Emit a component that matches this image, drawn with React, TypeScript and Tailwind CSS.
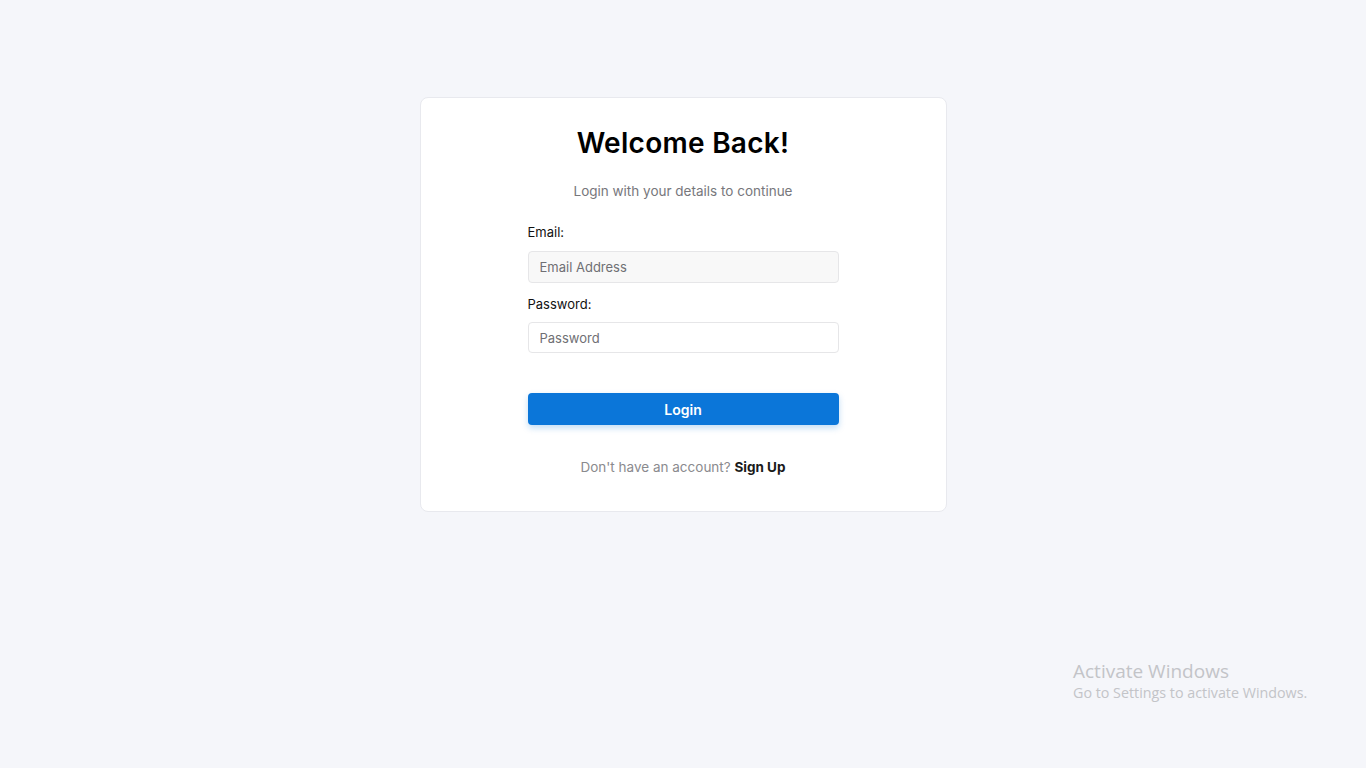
export default function App() {
  return (
    <div className="relative min-h-screen w-full bg-[#f5f6fa] font-['Inter','Noto_Sans',sans-serif]">
      <div className="flex justify-center pt-[97px]">
        <div className="w-[527px] rounded-lg border border-[#e8e9ee] bg-white px-[107px] pt-[27px] pb-[34px]">
          <h1 className="text-center text-[28px] leading-9 font-semibold tracking-[0.01em] text-black">
            Welcome Back!
          </h1>
          <p className="mt-[20px] text-center text-[13.5px] leading-5 text-[#77777c]">
            Login with your details to continue
          </p>

          <form className="mt-[21px]" onSubmit={(e) => e.preventDefault()}>
            <label className="block text-[13px] leading-5 text-[#111]">Email:</label>
            <input
              type="email"
              placeholder="Email Address"
              className="mt-[9px] block h-[32px] w-full rounded-[4px] border border-[#e6e6e8] bg-[#f8f8f8] px-[11px] text-[13px] text-[#333] placeholder:text-[#6f6f74] outline-none"
            />

            <label className="mt-[11px] block text-[13px] leading-5 text-[#111]">Password:</label>
            <input
              type="password"
              placeholder="Password"
              className="mt-[8px] block h-[31px] w-full rounded-[4px] border border-[#e6e6e8] bg-white px-[11px] text-[13px] text-[#333] placeholder:text-[#6f6f74] outline-none"
            />

            <button
              type="submit"
              className="mt-[40px] block h-[32px] w-full rounded-[4px] bg-[#0b76d9] text-[14px] font-semibold text-white shadow-[0_3px_6px_rgba(11,118,217,0.25)]"
            >
              Login
            </button>
          </form>

          <p className="mt-[32px] text-center text-[13.5px] leading-5 text-[#8a8a8e]">
            Don't have an account? <a className="font-bold text-[#1a1a1a]">Sign Up</a>
          </p>
        </div>
      </div>

      {/* watermark */}
      <div className="pointer-events-none absolute left-[1073px] top-[659px] font-['Open_Sans','Noto_Sans',sans-serif] text-[#c3c4c8]">
        <div className="text-[19px] leading-6">Activate Windows</div>
        <div className="text-[14.3px] leading-5">Go to Settings to activate Windows.</div>
      </div>
    </div>
  );
}
